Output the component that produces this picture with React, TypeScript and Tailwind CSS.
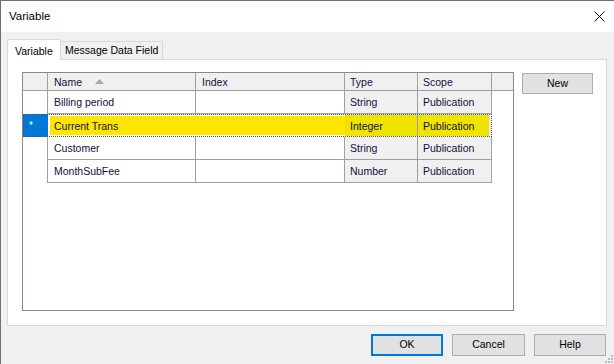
import React from "react";

const rows = [
  { name: "Billing period", type: "String", scope: "Publication" },
  { name: "Current Trans", type: "Integer", scope: "Publication", selected: true },
  { name: "Customer", type: "String", scope: "Publication" },
  { name: "MonthSubFee", type: "Number", scope: "Publication" },
];

function Btn({ label, width, focused }: { label: string; width: string; focused?: boolean }) {
  return (
    <div
      className={`${width} h-[22px] flex items-center justify-center bg-[#e1e1e1] text-[10.5px] text-black ${
        focused ? "border-2 border-[#0078d7]" : "border border-[#adadad]"
      }`}
    >
      {label}
    </div>
  );
}

export default function App() {
  return (
    <div
      className="relative w-[614px] h-[364px] flex flex-col border-l border-t border-[#6f6f6f] bg-[#f0f0f0] overflow-hidden"
      style={{ fontFamily: '"Liberation Sans", Arial, sans-serif' }}
    >
      {/* title bar */}
      <div className="h-[31px] shrink-0 bg-white flex items-center justify-between pl-[8px] pr-[9px]">
        <span className="text-[11.5px] text-black">Variable</span>
        <svg width="11" height="11" viewBox="0 0 11 11">
          <path d="M0.5 0.5 L10.5 10.5 M10.5 0.5 L0.5 10.5" stroke="#111" strokeWidth="1" fill="none" />
        </svg>
      </div>

      {/* body */}
      <div className="flex-1 flex flex-col pt-[7px] pl-[6px] pr-[7px]">
        {/* tabs */}
        <div className="flex items-end h-[20px]">
          <div className="relative z-10 -mb-px w-[54px] h-[21px] bg-white border border-b-0 border-[#d9d9d9] flex items-start pt-[4px] pl-[7px] text-[10.5px] text-black">
            Variable
          </div>
          <div className="w-[102px] h-[18px] bg-[#f0f0f0] border-t border-r border-[#d9d9d9] flex items-center pl-[4px] pt-[1px] text-[10.5px] text-black">
            Message Data Field
          </div>
        </div>

        {/* tab panel */}
        <div className="h-[267px] bg-white border border-[#d9d9d9] flex items-start pl-[14px] pt-[12px]">
          {/* grid */}
          <div className="w-[492px] h-[239px] border border-[#828790] flex flex-col text-[10.5px] text-[#10103c]">
            <div className="h-[18px] flex bg-[#f0f0f0] border-b border-[#a0a0a0]">
              <div className="w-[25px] border-r border-[#a0a0a0]" />
              <div className="w-[148px] border-r border-[#a0a0a0] flex items-center pl-[6px] pt-[2px]">
                <span>Name</span>
                <svg width="9" height="5" viewBox="0 0 9 5" className="ml-[13px] -mt-[2px]">
                  <path d="M0 5 L4.5 0 L9 5 Z" fill="#a8a8a8" />
                </svg>
              </div>
              <div className="w-[149px] border-r border-[#a0a0a0] flex items-center pl-[6px] pt-[2px]">Index</div>
              <div className="w-[73px] border-r border-[#a0a0a0] flex items-center pl-[5px] pt-[2px]">Type</div>
              <div className="w-[74px] border-r border-[#a0a0a0] flex items-center pl-[5px] pt-[2px]">Scope</div>
              <div className="flex-1" />
            </div>
            {rows.map((r) =>
              r.selected ? (
                <div
                  key={r.name}
                  className="w-[469px] h-[23px] flex outline outline-1 outline-dotted outline-[#555] -outline-offset-1"
                >
                  <div className="w-[25px] bg-[#0078d7] text-white flex items-center pl-[6px] text-[10px]">*</div>
                  <div className="w-[297px] py-[2px] pl-[2px] bg-white">
                    <div className="h-full bg-[#ffe600] flex items-center pl-[4px] pt-[2px]">{r.name}</div>
                  </div>
                  <div className="w-[73px] border-r border-[#a0a0a0] py-[1px] bg-[#f0f0f0]">
                    <div className="h-full bg-[#efe300] flex items-center pl-[5px] pt-[2px]">{r.type}</div>
                  </div>
                  <div className="w-[74px] py-[1px] pr-[3px] bg-[#f0f0f0]">
                    <div className="h-full bg-[#efe300] flex items-center pl-[5px] pt-[2px]">{r.scope}</div>
                  </div>
                </div>
              ) : (
                <div key={r.name} className="w-[469px] h-[23px] flex">
                  <div className="w-[25px] border-r border-[#a0a0a0]" />
                  <div className="w-[148px] border-r border-b border-[#a0a0a0] flex items-center pl-[6px] pt-[2px]">
                    {r.name}
                  </div>
                  <div className="w-[149px] border-r border-b border-[#a0a0a0]" />
                  <div className="w-[73px] border-r border-b border-[#a0a0a0] bg-[#f0f0f0] flex items-center pl-[5px] pt-[2px]">
                    {r.type}
                  </div>
                  <div className="w-[74px] border-r border-b border-[#a0a0a0] bg-[#f0f0f0] flex items-center pl-[5px] pt-[2px]">
                    {r.scope}
                  </div>
                </div>
              )
            )}
          </div>

          <div className="ml-[8px] mt-[1px] w-[71px] h-[21px] bg-[#e1e1e1] border border-[#adadad] flex items-center justify-center pt-[1px] text-[10.5px] text-black">
            New
          </div>
        </div>

        {/* bottom buttons */}
        <div className="flex justify-end gap-[9px] pt-[8px] pr-[1px]">
          <Btn label="OK" width="w-[72px]" focused />
          <Btn label="Cancel" width="w-[73px]" />
          <Btn label="Help" width="w-[72px]" />
        </div>
      </div>

      {/* size grip */}
      <svg width="8" height="8" viewBox="0 0 8 8" className="absolute right-[1px] bottom-[1px]">
        <rect x="6" y="0" width="2" height="2" fill="#bcbcbc" />
        <rect x="3" y="3" width="2" height="2" fill="#bcbcbc" />
        <rect x="6" y="3" width="2" height="2" fill="#bcbcbc" />
        <rect x="0" y="6" width="2" height="2" fill="#bcbcbc" />
        <rect x="3" y="6" width="2" height="2" fill="#bcbcbc" />
        <rect x="6" y="6" width="2" height="2" fill="#bcbcbc" />
      </svg>
    </div>
  );
}
